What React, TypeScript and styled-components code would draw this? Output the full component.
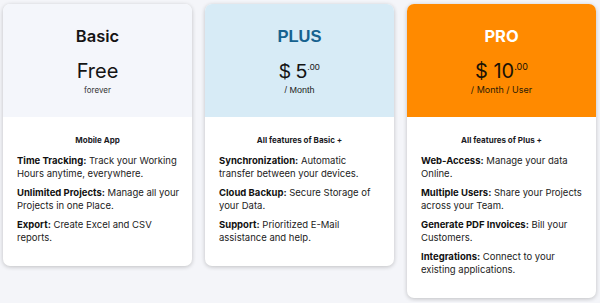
import styled, { createGlobalStyle } from 'styled-components'

const GlobalStyle = createGlobalStyle`
  html, body {
    margin: 0;
    padding: 0;
    background: #f4f5f9;
  }
  body {
    font-family: Inter, 'Noto Sans', sans-serif;
    color: #1b1b1f;
  }
`

type Tone = 'basic' | 'plus' | 'pro'

const tones = {
  basic: { bg: '#f4f6fb', title: '#141414', price: '#141414', note: '#333' },
  plus: { bg: '#d7ebf6', title: '#16628f', price: '#141414', note: '#222' },
  pro: { bg: '#ff8a00', title: '#ffffff', price: '#1a1206', note: '#2a1a06' },
}

const Board = styled.main`
  display: flex;
  align-items: flex-start;
  gap: 13px;
  padding: 4px 3px;
`

const Card = styled.section`
  flex: 0 0 189px;
  background: #fff;
  border-radius: 7px;
  overflow: hidden;
  box-shadow: 0 1px 4px rgba(0, 0, 0, 0.22);
`

const Header = styled.header<{ $tone: Tone }>`
  background: ${({ $tone }) => tones[$tone].bg};
  display: flex;
  flex-direction: column;
  align-items: center;
  padding: 20px 0 21px;
  height: 113px;
  box-sizing: border-box;
  font-family: ${({ $tone }) =>
    $tone === 'plus' ? "'Liberation Sans', Arial, sans-serif" : "Inter, 'Noto Sans', sans-serif"};
`

const Title = styled.h2<{ $tone: Tone }>`
  margin: 0;
  font-size: 16.5px;
  line-height: 24px;
  font-weight: ${({ $tone }) => ($tone === 'basic' ? 600 : 700)};
  color: ${({ $tone }) => tones[$tone].title};
`

const Price = styled.div<{ $tone: Tone }>`
  margin-top: 10px;
  font-size: 20px;
  line-height: 26px;
  color: ${({ $tone }) => tones[$tone].price};

  sup {
    font-size: 9px;
    vertical-align: top;
    position: relative;
    top: -4px;
  }
`

const Note = styled.div<{ $tone: Tone }>`
  font-size: ${({ $tone }) => ($tone === 'basic' ? '8px' : '9px')};
  line-height: 12px;
  color: ${({ $tone }) => tones[$tone].note};
`

const Body = styled.div`
  padding: 17px 11px 22px 14px;
`

const Lead = styled.h3`
  margin: 0 0 8px;
  padding-right: 3px;
  text-align: center;
  font-size: 8px;
  line-height: 12px;
  font-weight: 700;
`

const Features = styled.ul`
  list-style: none;
  margin: 0;
  padding: 0;
  display: grid;
  gap: 6px;
`

const Feature = styled.li`
  font-size: 9.5px;
  line-height: 13px;
  color: #222;

  b {
    font-weight: 700;
    color: #111;
  }
`

type Plan = {
  tone: Tone
  name: string
  price: string
  cents?: string
  note: string
  lead: string
  features: [string, string][]
}

const plans: Plan[] = [
  {
    tone: 'basic',
    name: 'Basic',
    price: 'Free',
    note: 'forever',
    lead: 'Mobile App',
    features: [
      ['Time Tracking:', 'Track your Working Hours anytime, everywhere.'],
      ['Unlimited Projects:', 'Manage all your Projects in one Place.'],
      ['Export:', 'Create Excel and CSV reports.'],
    ],
  },
  {
    tone: 'plus',
    name: 'PLUS',
    price: '$ 5',
    cents: '.00',
    note: '/ Month',
    lead: 'All features of Basic +',
    features: [
      ['Synchronization:', 'Automatic transfer between your devices.'],
      ['Cloud Backup:', 'Secure Storage of your Data.'],
      ['Support:', 'Prioritized E-Mail assistance and help.'],
    ],
  },
  {
    tone: 'pro',
    name: 'PRO',
    price: '$ 10',
    cents: '.00',
    note: '/ Month / User',
    lead: 'All features of Plus +',
    features: [
      ['Web-Access:', 'Manage your data Online.'],
      ['Multiple Users:', 'Share your Projects across your Team.'],
      ['Generate PDF Invoices:', 'Bill your Customers.'],
      ['Integrations:', 'Connect to your existing applications.'],
    ],
  },
]

export default function App() {
  return (
    <>
      <GlobalStyle />
      <Board>
        {plans.map((plan) => (
          <Card key={plan.name}>
            <Header $tone={plan.tone}>
              <Title $tone={plan.tone}>{plan.name}</Title>
              <Price $tone={plan.tone}>
                {plan.price}
                {plan.cents ? <sup>{plan.cents}</sup> : null}
              </Price>
              <Note $tone={plan.tone}>{plan.note}</Note>
            </Header>
            <Body>
              <Lead>{plan.lead}</Lead>
              <Features>
                {plan.features.map(([label, text]) => (
                  <Feature key={label}>
                    <b>{label}</b> {text}
                  </Feature>
                ))}
              </Features>
            </Body>
          </Card>
        ))}
      </Board>
    </>
  )
}
